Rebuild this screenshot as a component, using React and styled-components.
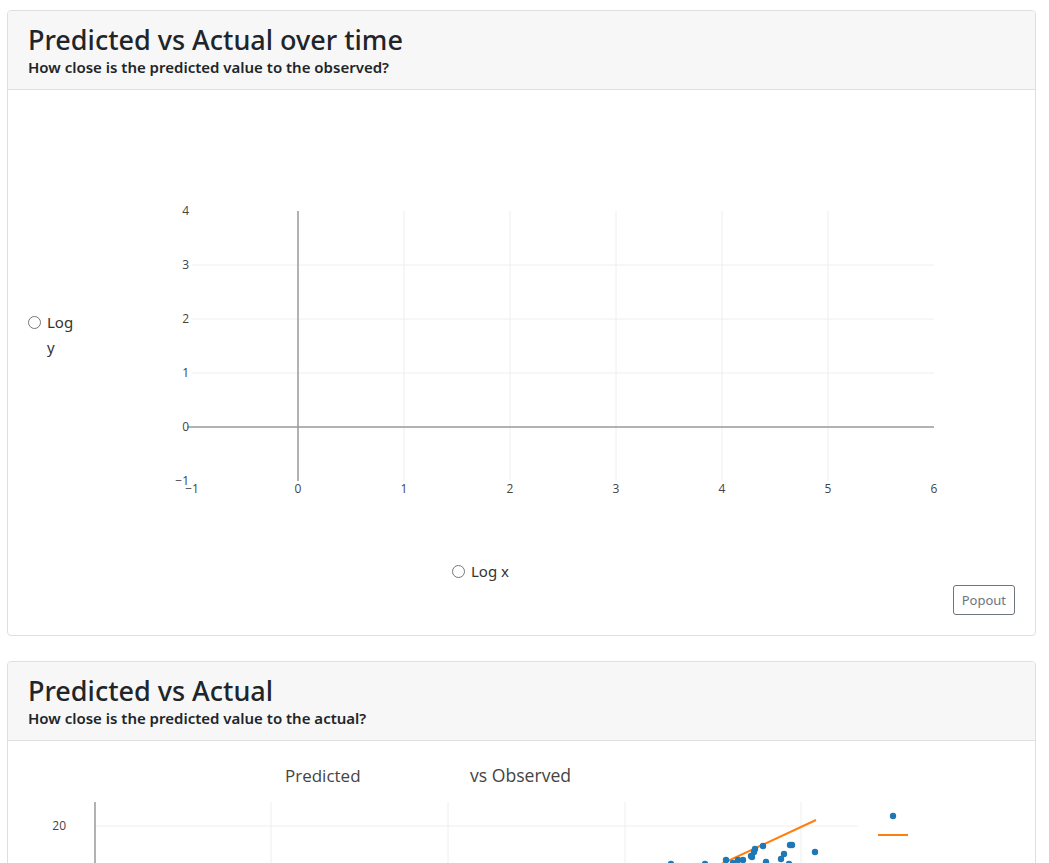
import { createGlobalStyle, styled } from "styled-components"

const GlobalStyle = createGlobalStyle`
  body {
    margin: 0;
    background: #fff;
    font-family: "Noto Sans", "Open Sans", sans-serif;
    color: #212529;
  }
`

const X_TICKS = [-1, 0, 1, 2, 3, 4, 5, 6]
const Y_TICKS = [-1, 0, 1, 2, 3, 4]
const px = (v) => 94 + 106 * (v + 1)
const py = (v) => 316 - 54 * v

const SCATTER = [
  [815, 851], [792, 844], [790, 844], [784, 853], [781, 858], [766, 861],
  [763, 845], [755, 848], [754, 851], [751, 855], [752, 856], [743, 859],
  [738, 859], [733, 862], [726, 859], [705, 863], [671, 863], [789, 863],
  [700, 880], [680, 884], [660, 895], [640, 900], [620, 905], [610, 915],
]

const EmptyChart = () => (
  <svg width="910" height="440" viewBox="0 0 910 440">
    {[1, 2, 3].map((v) => (
      <line key={v} x1={px(-1)} x2={px(6)} y1={py(v)} y2={py(v)} stroke="#eee" />
    ))}
    {[1, 2, 3, 4, 5].map((v) => (
      <line key={v} x1={px(v)} x2={px(v)} y1={py(4)} y2={py(-1)} stroke="#eee" />
    ))}
    <line x1={px(0)} x2={px(0)} y1={py(4)} y2={py(-1)} stroke="#999" strokeWidth="1.5" />
    <line x1={px(-1) - 5} x2={px(6)} y1={py(0)} y2={py(0)} stroke="#999" strokeWidth="1.5" />
    <g fontFamily="Open Sans, sans-serif" fontSize="12" fill="#444">
      {Y_TICKS.map((v) => (
        <text key={v} x={91} y={py(v) + 4} textAnchor="end">
          {v < 0 ? `\u2212${-v}` : v}
        </text>
      ))}
      {X_TICKS.map((v) => (
        <text key={v} x={px(v)} y={382} textAnchor="middle">
          {v < 0 ? `\u2212${-v}` : v}
        </text>
      ))}
    </g>
  </svg>
)

const ScatterChart = () => (
  <svg width="988" height="450" viewBox="0 0 988 450">
    <g fontFamily="Open Sans, sans-serif" fontSize="17" fill="#444">
      <text x="257" y="20">Predicted</text>
      <text x="442" y="20" fontSize="17.6">vs Observed</text>
    </g>
    {[64, 240, 416].map((y) => (
      <line key={y} x1="67" x2="830" y1={y} y2={y} stroke="#eee" />
    ))}
    {[243, 420, 597, 773].map((x) => (
      <line key={x} x1={x} x2={x} y1="40" y2="440" stroke="#eee" />
    ))}
    <line x1="67" x2="67" y1="40" y2="440" stroke="#999" strokeWidth="1.5" />
    <text x="38" y="68" textAnchor="end" fontFamily="Open Sans, sans-serif" fontSize="12" fill="#444">
      20
    </text>
    <line x1="788" y1="58" x2="440" y2="220" stroke="#ff7f0e" strokeWidth="2" />
    {SCATTER.map(([x, y], i) => (
      <circle key={i} cx={x - 28} cy={y - 761} r="3.2" fill="#1f77b4" />
    ))}
    <circle cx="865" cy="54" r="3.2" fill="#1f77b4" />
    <line x1="850" x2="880" y1="73" y2="73" stroke="#ff7f0e" strokeWidth="2" />
  </svg>
)

export default function App() {
  return (
    <>
      <GlobalStyle />
      <Page>
        <Card>
          <CardHeader>
            <Title>Predicted vs Actual over time</Title>
            <Subtitle>How close is the predicted value to the observed?</Subtitle>
          </CardHeader>
          <CardBody>
            <ChartRow>
              <RadioOption $width="52px" $shift="8px">
                <Radio type="radio" name="logy" />
                <span>Log y</span>
              </RadioOption>
              <EmptyChart />
            </ChartRow>
            <AxisToggle>
              <RadioOption>
                <Radio type="radio" name="logx" />
                <span>Log x</span>
              </RadioOption>
            </AxisToggle>
            <Footer>
              <PopoutButton>Popout</PopoutButton>
            </Footer>
          </CardBody>
        </Card>
        <Card>
          <CardHeader>
            <Title>Predicted vs Actual</Title>
            <Subtitle>How close is the predicted value to the actual?</Subtitle>
          </CardHeader>
          <CardBody>
            <ScatterChart />
          </CardBody>
        </Card>
      </Page>
    </>
  )
}

const Page = styled.div`
  padding: 10px 13px 0 7px;
  display: flex;
  flex-direction: column;
  gap: 25px;
`

const Card = styled.div`
  border: 1px solid #dfdfdf;
  border-radius: 4px;
  background: #fff;
  overflow: hidden;
`

const CardHeader = styled.div`
  background: #f7f7f7;
  border-bottom: 1px solid #dfdfdf;
  padding: 13px 20px 11px;
`

const Title = styled.h3`
  margin: 0;
  font-size: 27px;
  font-weight: 500;
  line-height: 32px;
  color: #212529;
`

const Subtitle = styled.div`
  font-size: 15px;
  font-weight: 600;
  line-height: 22px;
  color: #212529;
`

const CardBody = styled.div`
  padding: 21px 20px 20px;
`

const ChartRow = styled.div`
  display: flex;
  align-items: center;
  gap: 18px;
`

const RadioOption = styled.label`
  display: flex;
  align-items: flex-start;
  gap: 6px;
  width: ${(p) => p.$width || "auto"};
  margin-top: ${(p) => p.$shift || "0"};
  font-size: 15px;
  line-height: 25px;
  color: #333;
`

const Radio = styled.input`
  margin: 6px 0 0;
  width: 13px;
  height: 13px;
`

const AxisToggle = styled.div`
  display: flex;
  padding-left: 424px;
  margin-top: 8px;
`

const Footer = styled.div`
  display: flex;
  justify-content: flex-end;
  margin-top: 1px;
`

const PopoutButton = styled.button`
  font-family: inherit;
  font-size: 13px;
  color: #6c757d;
  background: #fff;
  border: 1px solid #6c757d;
  border-radius: 3px;
  padding: 4px 8px;
  height: 30px;
`
